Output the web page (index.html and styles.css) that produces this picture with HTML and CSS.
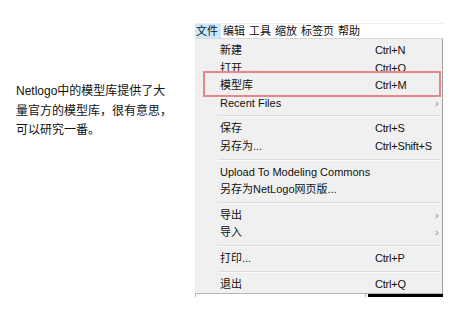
FILE: index.html
```html
<!DOCTYPE html>
<html lang="zh-CN">
<head>
    <meta charset="UTF-8">
    <title>NetLogo 模型库</title>
    <link rel="stylesheet" href="styles.css">
</head>
<body>
    <div class="page">
        <p class="note">Netlogo中的模型库提供了大<br>量官方的模型库，很有意思，<br>可以研究一番。</p>

        <div class="shot">
            <div class="menubar">
                <span class="menubar-item active">文件</span>
                <span class="menubar-item">编辑</span>
                <span class="menubar-item">工具</span>
                <span class="menubar-item">缩放</span>
                <span class="menubar-item">标签页</span>
                <span class="menubar-item">帮助</span>
            </div>

            <div class="dropdown">
                <div class="item"><span>新建</span><span class="key">Ctrl+N</span></div>
                <div class="item"><span>打开......</span><span class="key">Ctrl+O</span></div>
                <div class="item"><span>模型库</span><span class="key">Ctrl+M</span></div>
                <div class="item"><span>Recent Files</span><span class="key"></span><span class="arrow">›</span></div>
                <div class="sep"></div>
                <div class="item"><span>保存</span><span class="key">Ctrl+S</span></div>
                <div class="item"><span>另存为...</span><span class="key">Ctrl+Shift+S</span></div>
                <div class="sep"></div>
                <div class="item"><span>Upload To Modeling Commons</span></div>
                <div class="item"><span>另存为NetLogo网页版...</span></div>
                <div class="sep"></div>
                <div class="item"><span>导出</span><span class="key"></span><span class="arrow">›</span></div>
                <div class="item"><span>导入</span><span class="key"></span><span class="arrow">›</span></div>
                <div class="sep"></div>
                <div class="item"><span>打印...</span><span class="key">Ctrl+P</span></div>
                <div class="sep"></div>
                <div class="item"><span>退出</span><span class="key">Ctrl+Q</span></div>

                <div class="mark"></div>
            </div>

            <div class="under">
                <div class="under-left"></div>
                <div class="under-dark"></div>
            </div>
        </div>
    </div>
</body>
</html>
```

FILE: styles.css
```css
body {
    margin: 0;
    background: #fff;
    color: #111;
    font-family: "Liberation Sans", "Noto Sans CJK SC", sans-serif;
}
.page {
    display: flex;
    align-items: flex-start;
    width: 474px;
    height: 336px;
}
.note {
    width: 179px;
    margin: 82px 0 0 16px;
    font-size: 12px;
    line-height: 19.5px;
    color: #111;
}
.shot {
    margin-top: 23px;
    width: 248px;
}
.menubar {
    display: flex;
    height: 14px;
    border-top: 1px solid #eeeeee;
    background: #fff;
    font-size: 11px;
    line-height: 14px;
}
.menubar-item {
    padding: 0 2px;
}
.menubar-item.active {
    background: #cce8ff;
    padding: 0 3px 0 1px;
}
.dropdown {
    position: relative;
    background: #f0f0f0;
    border-top: 1px solid #d9d9d9;
    border-right: 1px solid #a0a0a0;
    border-bottom: 1px solid #b4b4b4;
    padding: 3px 0 0;
    font-size: 11px;
}
.item {
    display: grid;
    grid-template-columns: 155px 1fr 7px;
    height: 17.6px;
    line-height: 17.6px;
    padding-left: 25px;
    white-space: nowrap;
}
.key {
    color: #111;
    letter-spacing: -0.2px;
}
.arrow {
    color: #888;
    font-size: 11px;
    line-height: 16px;
}
.sep {
    height: 1px;
    margin: 3px 2px 3px 23px;
    background: #dcdcdc;
    border-bottom: 1px solid #fafafa;
}
.mark {
    position: absolute;
    left: 8px;
    top: 32px;
    width: 234px;
    height: 22px;
    border: 2px solid #e8878a;
}
.under {
    display: flex;
    height: 3px;
}
.under-left {
    width: 169px;
    border-left: 1px solid #b4b4b4;
    border-right: 1px solid #b4b4b4;
}
.under-dark {
    margin-left: 2px;
    flex: 1;
    background: #000;
}
```
